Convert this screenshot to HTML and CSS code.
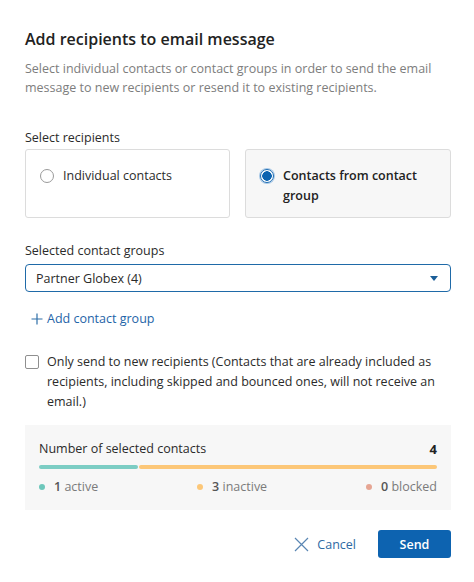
FILE: index.html
```html
<!DOCTYPE html>
<html>
<head>
<meta charset="utf-8">
<link rel="stylesheet" href="styles.css">
</head>
<body>
<div class="dialog">
  <h1 class="title">Add recipients to email message</h1>
  <p class="desc">Select individual contacts or contact groups in order to send the email message to new recipients or resend it to existing recipients.</p>

  <div class="label first-label">Select recipients</div>
  <div class="cards">
    <div class="card">
      <span class="radio"></span>
      <span class="card-text">Individual contacts</span>
    </div>
    <div class="card card-selected">
      <span class="radio radio-on"></span>
      <span class="card-text strong">Contacts from contact group</span>
    </div>
  </div>

  <div class="label groups-label">Selected contact groups</div>
  <div class="select">
    <span>Partner Globex (4)</span>
    <svg class="caret" width="8" height="5" viewBox="0 0 8 5"><path d="M0 0h8L4 5z" fill="#1b5e98"/></svg>
  </div>

  <div class="add-link">
    <svg width="12" height="12" viewBox="0 0 12 12"><path d="M6 0.5v11M0.5 6h11" stroke="#2e6fa8" stroke-width="1.2" fill="none"/></svg>
    <span>Add contact group</span>
  </div>

  <div class="check-row">
    <span class="checkbox"></span>
    <span class="check-text">Only send to new recipients (Contacts that are already included as recipients, including skipped and bounced ones, will not receive an email.)</span>
  </div>

  <div class="summary">
    <div class="summary-head">
      <span>Number of selected contacts</span>
      <span class="count">4</span>
    </div>
    <div class="bar">
      <div class="seg seg-active" style="width:25%"></div>
      <div class="seg seg-inactive" style="width:75%"></div>
    </div>
    <div class="legend">
      <span class="item"><i class="dot dot-active"></i><b>1</b>&nbsp;active</span>
      <span class="item"><i class="dot dot-inactive"></i><b>3</b>&nbsp;inactive</span>
      <span class="item"><i class="dot dot-blocked"></i><b>0</b>&nbsp;blocked</span>
    </div>
  </div>

  <div class="actions">
    <button class="cancel">
      <svg width="15" height="15" viewBox="0 0 15 15"><path d="M1 1l13 13M14 1L1 14" stroke="#5a86b3" stroke-width="1.2" fill="none"/></svg>
      <span>Cancel</span>
    </button>
    <button class="send">Send</button>
  </div>
</div>
</body>
</html>
```

FILE: styles.css
```css
* { box-sizing: border-box; }
html, body { margin: 0; padding: 0; background: #fff; }
body {
  font-family: "Open Sans", "Noto Sans", sans-serif;
  font-size: 12.5px;
  color: #2b2b2b;
}
.dialog {
  width: 474px;
  padding: 27px 23px 0 25px;
}
.title {
  margin: 0;
  font-size: 16px;
  font-weight: 600;
  line-height: 24px;
  color: #222;
}
.desc {
  margin: 8px 0 0;
  line-height: 19px;
  color: #7d7d7d;
}
.label {
  line-height: 18px;
  color: #2b2b2b;
}
.first-label { margin-top: 32px; }
.cards {
  display: grid;
  grid-template-columns: 205px 206px;
  gap: 15px;
  margin-top: 2px;
}
.card {
  height: 69px;
  border: 1px solid #dcdcdc;
  border-radius: 3px;
  padding: 16px 16px 0 14px;
  display: flex;
  align-items: flex-start;
  gap: 9px;
  background: #fff;
}
.card-selected { background: #f7f7f7; padding-right: 20px; }
.card-text { line-height: 20px; }
.strong { font-weight: 600; color: #222; }
.radio {
  flex: none;
  width: 14px;
  height: 14px;
  margin-top: 3px;
  border-radius: 50%;
  border: 1px solid #9a9a9a;
  background: #fff;
}
.radio-on {
  border: 1px solid #1c6cb3;
  box-shadow: 0 0 0 1px #a9c8e6;
  background: radial-gradient(circle, #0d63b0 0 4.5px, #fff 5px);
}
.groups-label { margin-top: 24px; }
.select {
  margin-top: 4px;
  height: 28px;
  border: 1.5px solid #1f6aa8;
  border-radius: 4px;
  padding: 0 12px 0 10px;
  display: flex;
  align-items: center;
  justify-content: space-between;
  color: #2b2b2b;
}
.caret { margin-top: 1px; }
.add-link {
  margin-top: 17px;
  margin-left: 6px;
  display: flex;
  align-items: center;
  gap: 4px;
  color: #1e64a8;
  line-height: 20px;
}
.check-row {
  margin-top: 23px;
  display: flex;
  align-items: flex-start;
  gap: 8px;
}
.checkbox {
  flex: none;
  width: 14px;
  height: 14px;
  margin-top: 3px;
  border: 1px solid #8f8f8f;
  border-radius: 2px;
  background: #fff;
}
.check-text { line-height: 20px; color: #2b2b2b; }
.summary {
  margin-top: 13px;
  background: #f7f7f7;
  padding: 14px 14px 15px 14px;
  height: 85px;
}
.summary-head {
  display: flex;
  justify-content: space-between;
  line-height: 20px;
  color: #2b2b2b;
}
.count { font-weight: 700; color: #222; font-size: 13px; }
.bar {
  display: flex;
  gap: 1px;
  margin-top: 6px;
  height: 4px;
}
.seg { height: 4px; border-radius: 2px; }
.seg-active { background: #7ccdc4; }
.seg-inactive { background: #fcc778; }
.legend {
  display: flex;
  justify-content: space-between;
  margin-top: 8px;
  line-height: 20px;
  color: #7b7b7b;
}
.legend b { font-weight: 600; color: #555; }
.item { display: flex; align-items: center; }
.dot {
  display: inline-block;
  width: 6px;
  height: 6px;
  border-radius: 50%;
  margin-right: 9px;
}
.dot-active { background: #6dc7bb; }
.dot-inactive { background: #fcc778; }
.dot-blocked { background: #e6a593; }
.actions {
  margin-top: 20px;
  display: flex;
  justify-content: flex-end;
  align-items: center;
  gap: 22px;
}
button {
  font-family: inherit;
  font-size: 12.5px;
  cursor: pointer;
}
.cancel {
  border: none;
  background: none;
  padding: 0;
  display: flex;
  align-items: center;
  gap: 8px;
  color: #2e6aa3;
}
.send {
  width: 73px;
  height: 28px;
  border: none;
  border-radius: 3px;
  background: #0d63b0;
  color: #fff;
  font-weight: 600;
}
```
